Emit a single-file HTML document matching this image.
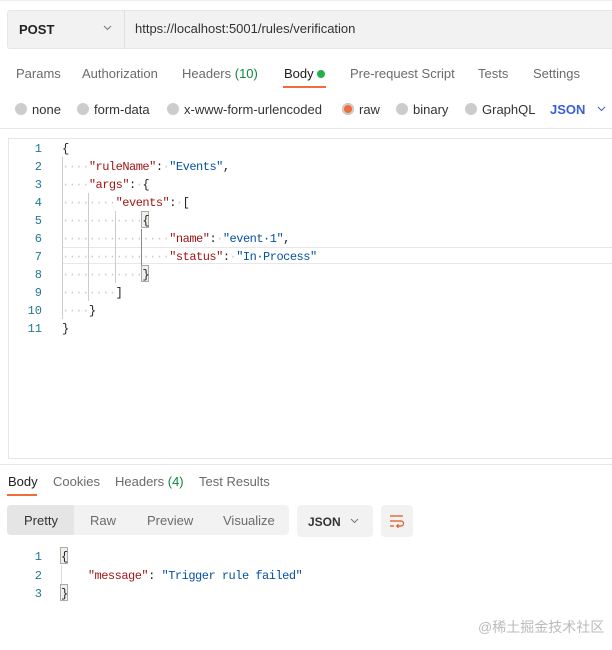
<!DOCTYPE html>
<html><head><meta charset="utf-8"><style>
*{margin:0;padding:0;box-sizing:border-box}
body{width:612px;height:650px;background:#fff;font-family:"Liberation Sans",sans-serif;font-size:13px;color:#212121;position:relative;overflow:hidden}
.abs{position:absolute;white-space:nowrap}
.mono{font-family:"Liberation Mono",monospace;font-size:12px}
.k{color:#a31515}.s{color:#0451a5}.p{color:#212121}
.dot{color:#ccc}
.radio{display:inline-block;width:12px;height:12px;border-radius:50%;background:#ccc;vertical-align:-1px;margin-right:5px}
</style></head><body>
<div class="abs" style="left:0;top:0;width:612px;height:1px;background:#eee"></div>
<div class="abs" style="left:7px;top:10px;width:610px;height:39px;background:#f2f2f2;border:1px solid #e6e6e6;border-radius:3px"></div>
<div class="abs" style="left:124px;top:10px;width:1px;height:39px;background:#e0e0e0"></div>
<div class="abs" style="left:19px;top:22px;font-weight:bold;font-size:13px">POST</div>
<svg class="abs" style="left:103px;top:25px" width="9" height="6" viewBox="0 0 9 6" fill="none" stroke="#777" stroke-width="1"><path d="M1 1l3.5 3.5L8 1"/></svg>
<div class="abs" style="left:135px;top:21px;font-size:13px;color:#333">https://localhost:5001/rules/verification</div>
<div class="abs" style="left:16px;top:66px;color:#6b6b6b">Params</div>
<div class="abs" style="left:82px;top:66px;color:#6b6b6b">Authorization</div>
<div class="abs" style="left:182px;top:66px;color:#6b6b6b">Headers <span style="color:#0a8a3a">(10)</span></div>
<div class="abs" style="left:284px;top:66px;color:#212121">Body <span style="display:inline-block;width:8px;height:8px;border-radius:50%;background:#26b04a;vertical-align:0"></span></div>
<div class="abs" style="left:283px;top:86px;width:43px;height:2px;background:#f26b3a"></div>
<div class="abs" style="left:350px;top:66px;color:#6b6b6b">Pre-request Script</div>
<div class="abs" style="left:478px;top:66px;color:#6b6b6b">Tests</div>
<div class="abs" style="left:533px;top:66px;color:#6b6b6b">Settings</div>
<div class="abs" style="left:15px;top:102px;color:#333"><span class="radio"></span>none</div>
<div class="abs" style="left:77px;top:102px;color:#333"><span class="radio"></span>form-data</div>
<div class="abs" style="left:167px;top:102px;color:#333"><span class="radio"></span>x-www-form-urlencoded</div>
<div class="abs" style="left:342px;top:102px;color:#333"><span class="radio" style="background:#f26b3a;box-shadow:inset 0 0 0 2px #ccc"></span>raw</div>
<div class="abs" style="left:396px;top:102px;color:#333"><span class="radio"></span>binary</div>
<div class="abs" style="left:465px;top:102px;color:#333"><span class="radio"></span>GraphQL</div>
<div class="abs" style="left:550px;top:102px;color:#3b5fd9;font-weight:bold">JSON</div>
<svg class="abs" style="left:597px;top:106px" width="9" height="6" viewBox="0 0 9 6" fill="none" stroke="#3b5fd9" stroke-width="1"><path d="M1 1l3.5 3.5L8 1"/></svg>
<div class="abs" style="left:0;top:128px;width:612px;height:1px;background:#e8e8e8"></div>
<div class="abs" style="left:8px;top:138px;width:610px;height:321px;border:1px solid #e6e6e6"></div>
<div class="abs" style="left:62px;top:247px;width:560px;height:17px;border:1px solid #e8e8e8"></div>
<div class="abs" style="left:62px;top:157px;width:1px;height:162px;background:#ccc"></div>
<div class="abs" style="left:88px;top:193px;width:1px;height:108px;background:#ccc"></div>
<div class="abs" style="left:115px;top:211px;width:1px;height:72px;background:#ccc"></div>
<div class="abs" style="left:141px;top:229px;width:1px;height:36px;background:#888"></div>
<div class="abs" style="left:141px;top:211px;width:8px;height:17px;border:1px solid #aaa;background:#eef0ea"></div>
<div class="abs" style="left:141px;top:265px;width:8px;height:17px;border:1px solid #aaa;background:#eef0ea"></div>
<div class="abs mono" style="left:18px;top:140px;width:24px;text-align:right;line-height:18px;color:#237893">1<br>2<br>3<br>4<br>5<br>6<br>7<br>8<br>9<br>10<br>11</div>
<div class="abs mono" style="left:62px;top:140px;line-height:18px;letter-spacing:-0.5px"><span class="p">{</span><br><span class="dot">····</span><span class="k">"ruleName"</span>:<span class="dot">·</span><span class="s">"Events"</span>,<br><span class="dot">····</span><span class="k">"args"</span>:<span class="dot">·</span>{<br><span class="dot">········</span><span class="k">"events"</span>:<span class="dot">·</span>[<br><span class="dot">············</span>{<br><span class="dot">················</span><span class="k">"name"</span>:<span class="dot">·</span><span class="s">"event·1"</span>,<br><span class="dot">················</span><span class="k">"status"</span>:<span class="dot">·</span><span class="s">"In·Process"</span><br><span class="dot">············</span>}<br><span class="dot">········</span>]<br><span class="dot">····</span>}<br>}</div>
<div class="abs" style="left:0;top:464px;width:612px;height:1px;background:#e8e8e8"></div>
<div class="abs" style="left:8px;top:474px;color:#212121">Body</div>
<div class="abs" style="left:7px;top:494px;width:30px;height:2px;background:#f26b3a"></div>
<div class="abs" style="left:53px;top:474px;color:#6b6b6b">Cookies</div>
<div class="abs" style="left:115px;top:474px;color:#6b6b6b">Headers <span style="color:#0a8a3a">(4)</span></div>
<div class="abs" style="left:199px;top:474px;color:#6b6b6b">Test Results</div>
<div class="abs" style="left:7px;top:505px;width:282px;height:30px;background:#f2f2f2;border-radius:4px"></div>
<div class="abs" style="left:7px;top:505px;width:67px;height:30px;background:#e5e5e5;border-radius:4px 0 0 4px"></div>
<div class="abs" style="left:24px;top:513px;color:#333">Pretty</div>
<div class="abs" style="left:90px;top:513px;color:#6b6b6b">Raw</div>
<div class="abs" style="left:147px;top:513px;color:#6b6b6b">Preview</div>
<div class="abs" style="left:223px;top:513px;color:#6b6b6b">Visualize</div>
<div class="abs" style="left:297px;top:505px;width:76px;height:32px;background:#f2f2f2;border-radius:4px"></div>
<div class="abs" style="left:308px;top:515px;font-size:12px;font-weight:bold;color:#333">JSON</div>
<svg class="abs" style="left:350px;top:518px" width="9" height="6" viewBox="0 0 9 6" fill="none" stroke="#777" stroke-width="1"><path d="M1 1l3.5 3.5L8 1"/></svg>
<div class="abs" style="left:381px;top:505px;width:32px;height:32px;background:#f2f2f2;border-radius:4px"></div>
<svg class="abs" style="left:388px;top:512px" width="18" height="18" viewBox="0 0 18 18" fill="none" stroke="#e0561f" stroke-width="1.2"><path d="M2 4H15M2 9H13a2.5 2.5 0 0 1 0 5H9M10.5 12.3L8.8 14l1.7 1.7M2 14H6"/></svg>
<div class="abs" style="left:61px;top:565px;width:1px;height:20px;background:#ddd"></div>
<div class="abs" style="left:60px;top:547px;width:8px;height:17px;border:1px solid #aaa;background:#eef0ea"></div>
<div class="abs" style="left:60px;top:584px;width:8px;height:17px;border:1px solid #aaa;background:#eef0ea"></div>
<div class="abs mono" style="left:24px;top:548px;width:18px;text-align:right;line-height:18.5px;color:#237893">1<br>2<br>3</div>
<div class="abs mono" style="left:61px;top:548px;line-height:18.5px;letter-spacing:-0.5px">{<br>&nbsp;&nbsp;&nbsp;&nbsp;<span class="k">"message"</span>: <span class="s">"Trigger rule failed"</span><br>}</div>
<div class="abs" style="left:478px;top:617px;color:#bbb;font-family:'Liberation Sans','Noto Sans CJK SC',sans-serif;font-size:14px">@稀土掘金技术社区</div>
</body></html>
